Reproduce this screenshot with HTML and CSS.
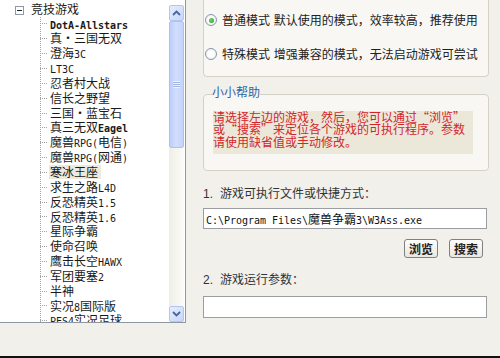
FILE: index.html
```html
<!DOCTYPE html>
<html lang="zh-CN">
<head>
<meta charset="utf-8">
<title>游戏设置</title>
<link rel="stylesheet" href="styles.css">
</head>
<body>
<div class="app">
  <div class="tree">
    <div class="tree-list">
      <div class="root"><span class="toggle"><span class="minus"></span></span><span class="root-label">竞技游戏</span></div>
      <ul class="items">
        <li><span class="lbl"><span class="en b">DotA-Allstars</span></span></li>
        <li><span class="lbl">真・三国无双</span></li>
        <li><span class="lbl">澄海<span class="en">3C</span></span></li>
        <li><span class="lbl"><span class="en">LT3C</span></span></li>
        <li><span class="lbl">忍者村大战</span></li>
        <li><span class="lbl">信长之野望</span></li>
        <li><span class="lbl">三国・蓝宝石</span></li>
        <li><span class="lbl">真三无双<span class="en b">Eagel</span></span></li>
        <li><span class="lbl">魔兽<span class="en">RPG(</span>电信<span class="en">)</span></span></li>
        <li><span class="lbl">魔兽<span class="en">RPG(</span>网通<span class="en">)</span></span></li>
        <li><span class="lbl sel">寒冰王座</span></li>
        <li><span class="lbl">求生之路<span class="en">L4D</span></span></li>
        <li><span class="lbl">反恐精英<span class="en">1.5</span></span></li>
        <li><span class="lbl">反恐精英<span class="en">1.6</span></span></li>
        <li><span class="lbl">星际争霸</span></li>
        <li><span class="lbl">使命召唤</span></li>
        <li><span class="lbl">鹰击长空<span class="en">HAWX</span></span></li>
        <li><span class="lbl">军团要塞<span class="en">2</span></span></li>
        <li><span class="lbl">半神</span></li>
        <li><span class="lbl">实况<span class="en">8</span>国际版</span></li>
        <li><span class="lbl"><span class="en">PES4</span>实况足球</span></li>
      </ul>
    </div>
    <div class="scrollbar">
      <div class="sb-btn">
        <svg width="9" height="6" viewBox="0 0 9 6"><path d="M1 5 L4.5 1.5 L8 5" fill="none" stroke="#4a6597" stroke-width="1.8"/></svg>
      </div>
      <div class="sb-thumb"><span class="grip"></span></div>
      <div class="sb-track"></div>
      <div class="sb-btn">
        <svg width="9" height="6" viewBox="0 0 9 6"><path d="M1 1 L4.5 4.5 L8 1" fill="none" stroke="#4a6597" stroke-width="1.8"/></svg>
      </div>
    </div>
  </div>

  <div class="main">
    <div class="mode-box">
      <label class="radio-row"><span class="radio checked"></span><span class="rtext">普通模式 默认使用的模式，效率较高，推荐使用</span></label>
      <label class="radio-row"><span class="radio"></span><span class="rtext">特殊模式 增强兼容的模式，无法启动游戏可尝试</span></label>
    </div>

    <fieldset class="help">
      <legend>小小帮助</legend>
      <div class="help-text">请选择左边的游戏，然后，您可以通过“浏览”<br>或“搜索”来定位各个游戏的可执行程序。参数<br>请使用缺省值或手动修改。</div>
    </fieldset>

    <div class="label"><span class="num">1.</span>游戏可执行文件或快捷方式：</div>
    <div class="field"><span class="en">C:\Program Files\</span>魔兽争霸<span class="en">3\W3Ass.exe</span></div>
    <div class="buttons">
      <button class="btn">浏览</button>
      <button class="btn">搜索</button>
    </div>

    <div class="label label2"><span class="num">2.</span>游戏运行参数：</div>
    <div class="field field2"></div>
  </div>
</div>
</body>
</html>
```
FILE: styles.css
```css
* { box-sizing: border-box; }

html, body {
  margin: 0;
  padding: 0;
}

body {
  width: 500px;
  height: 358px;
  overflow: hidden;
  background: #f2f0eb;
  font-family: "Noto Sans CJK SC", sans-serif;
  font-size: 12px;
  color: #1a1a1a;
}

.app {
  display: flex;
  align-items: flex-start;
  height: 358px;
  border-bottom: 2px solid #111;
}

/* ---------- tree ---------- */
.tree {
  width: 186px;
  height: 323px;
  flex: none;
  display: flex;
  background: #fff;
  border-right: 1px solid #8e98a4;
  border-bottom: 1px solid #8e98a4;
}

.tree-list {
  width: 169px;
  overflow: hidden;
  padding-top: 1.7px;
}

.root {
  display: flex;
  align-items: center;
  height: 14.85px;
  line-height: 14.85px;
}

.toggle {
  width: 9px;
  height: 9px;
  margin-left: 15px;
  margin-top: 3px;
  border: 1px solid #8c9aa8;
  background: #fff;
  display: flex;
  align-items: center;
  justify-content: center;
}

.minus {
  width: 5px;
  height: 1px;
  background: #222;
}

.root-label {
  margin-left: 7px;
}

.items {
  list-style: none;
  margin: 0 0 0 40px;
  padding: 0;
  background: repeating-linear-gradient(to bottom, #a3a3a3 0 1px, transparent 1px 2px) left top / 1px 100% no-repeat;
}

.items li {
  height: 14.85px;
  line-height: 14.85px;
  padding-left: 9px;
  white-space: nowrap;
  background: repeating-linear-gradient(to right, #a3a3a3 0 1px, transparent 1px 2px) left center / 8px 1px no-repeat;
}

.lbl {
  display: inline-block;
  padding: 0 1px;
  line-height: 14px;
}

.lbl.sel {
  background: #ece9de;
  padding: 0 3px 0 1px;
}

.en {
  font-family: "DejaVu Sans Mono", monospace;
  font-size: 10px;
  letter-spacing: -0.02px;
}

.en.b {
  font-weight: bold;
}

/* ---------- scrollbar ---------- */
.scrollbar {
  width: 15px;
  margin-right: 1px;
  height: 322px;
  padding-top: 5px;
  display: flex;
  flex-direction: column;
}

.sb-btn {
  height: 16px;
  flex: none;
  border: 1px solid #b3c5f1;
  border-radius: 2px;
  background: linear-gradient(135deg, #e6eefe, #c6d6fb);
  display: flex;
  align-items: center;
  justify-content: center;
}

.sb-thumb {
  height: 127px;
  flex: none;
  border: 1px solid #aec2f2;
  border-radius: 2px;
  background: linear-gradient(to right, #bccdfa, #d2defd 45%, #c3d3fb);
  display: flex;
  align-items: center;
  justify-content: center;
}

.grip {
  width: 7px;
  height: 7px;
  background: repeating-linear-gradient(to bottom, #eef3ff 0 1px, #9fb4e6 1px 2px);
}

.sb-track {
  flex: 1;
  background: linear-gradient(to right, #efeee7, #fbfbf8);
}

/* ---------- right column ---------- */
.main {
  width: 286px;
  margin-left: 17px;
  display: flex;
  flex-direction: column;
}

.mode-box {
  margin-top: -6px;
  height: 83px;
  border: 1px solid #d4d1c6;
  border-radius: 0 0 4px 4px;
  background: #f8f7f3;
  padding: 17px 0 0 1px;
  display: flex;
  flex-direction: column;
  gap: 18px;
}

.radio-row {
  display: flex;
  align-items: center;
  height: 16px;
  line-height: 16px;
  color: #222;
}

.radio {
  width: 12px;
  height: 12px;
  flex: none;
  border-radius: 50%;
  border: 1px solid #8797ab;
  background: radial-gradient(circle at 50% 50%, #fff 0 40%, #e4e2da 100%);
  display: flex;
  align-items: center;
  justify-content: center;
}

.radio.checked::after {
  content: "";
  width: 5px;
  height: 5px;
  border-radius: 50%;
  background: radial-gradient(circle at 40% 40%, #6fd66f, #1f9a1f);
}

.rtext {
  margin-left: 5px;
  word-spacing: 1px;
}

.help {
  margin: 9px 0 0;
  padding: 0 0 16px 9px;
  border: 1px solid #d4d1c6;
  border-radius: 4px;
  background: #f8f7f3;
  min-width: 0;
}

.help legend {
  padding: 0 0 4px;
  margin-left: -1px;
  line-height: 12px;
  color: #2f64a8;
}

.help-text {
  margin-top: 8.5px;
  width: 260px;
  height: 43px;
  background: #ebe8da;
  color: #d3262b;
  line-height: 12.6px;
  white-space: nowrap;
}

.label {
  margin-top: 14px;
  line-height: 16px;
  color: #333;
}

.num {
  font-family: "Liberation Sans", sans-serif;
  display: inline-block;
  width: 17px;
}

.field {
  margin-top: 6px;
  width: 284px;
  height: 21px;
  border: 1px solid #9a9ea3;
  background: #fff;
  padding: 0 0 0 2px;
  line-height: 19px;
  white-space: nowrap;
  color: #111;
}

.buttons {
  margin-top: 10px;
  display: flex;
  justify-content: flex-end;
  gap: 11px;
  padding-right: 6px;
}

.btn {
  width: 34px;
  height: 19px;
  padding: 0;
  border: 1px solid #808080;
  border-radius: 3px;
  background: linear-gradient(#fdfdfb, #e9e7e0);
  font-family: "Noto Sans CJK SC", sans-serif;
  font-size: 12px;
  font-weight: bold;
  line-height: 17px;
  color: #222;
}

.label2 {
  margin-top: 13px;
}

.field2 {
  margin-top: 8px;
  height: 22px;
}
```
